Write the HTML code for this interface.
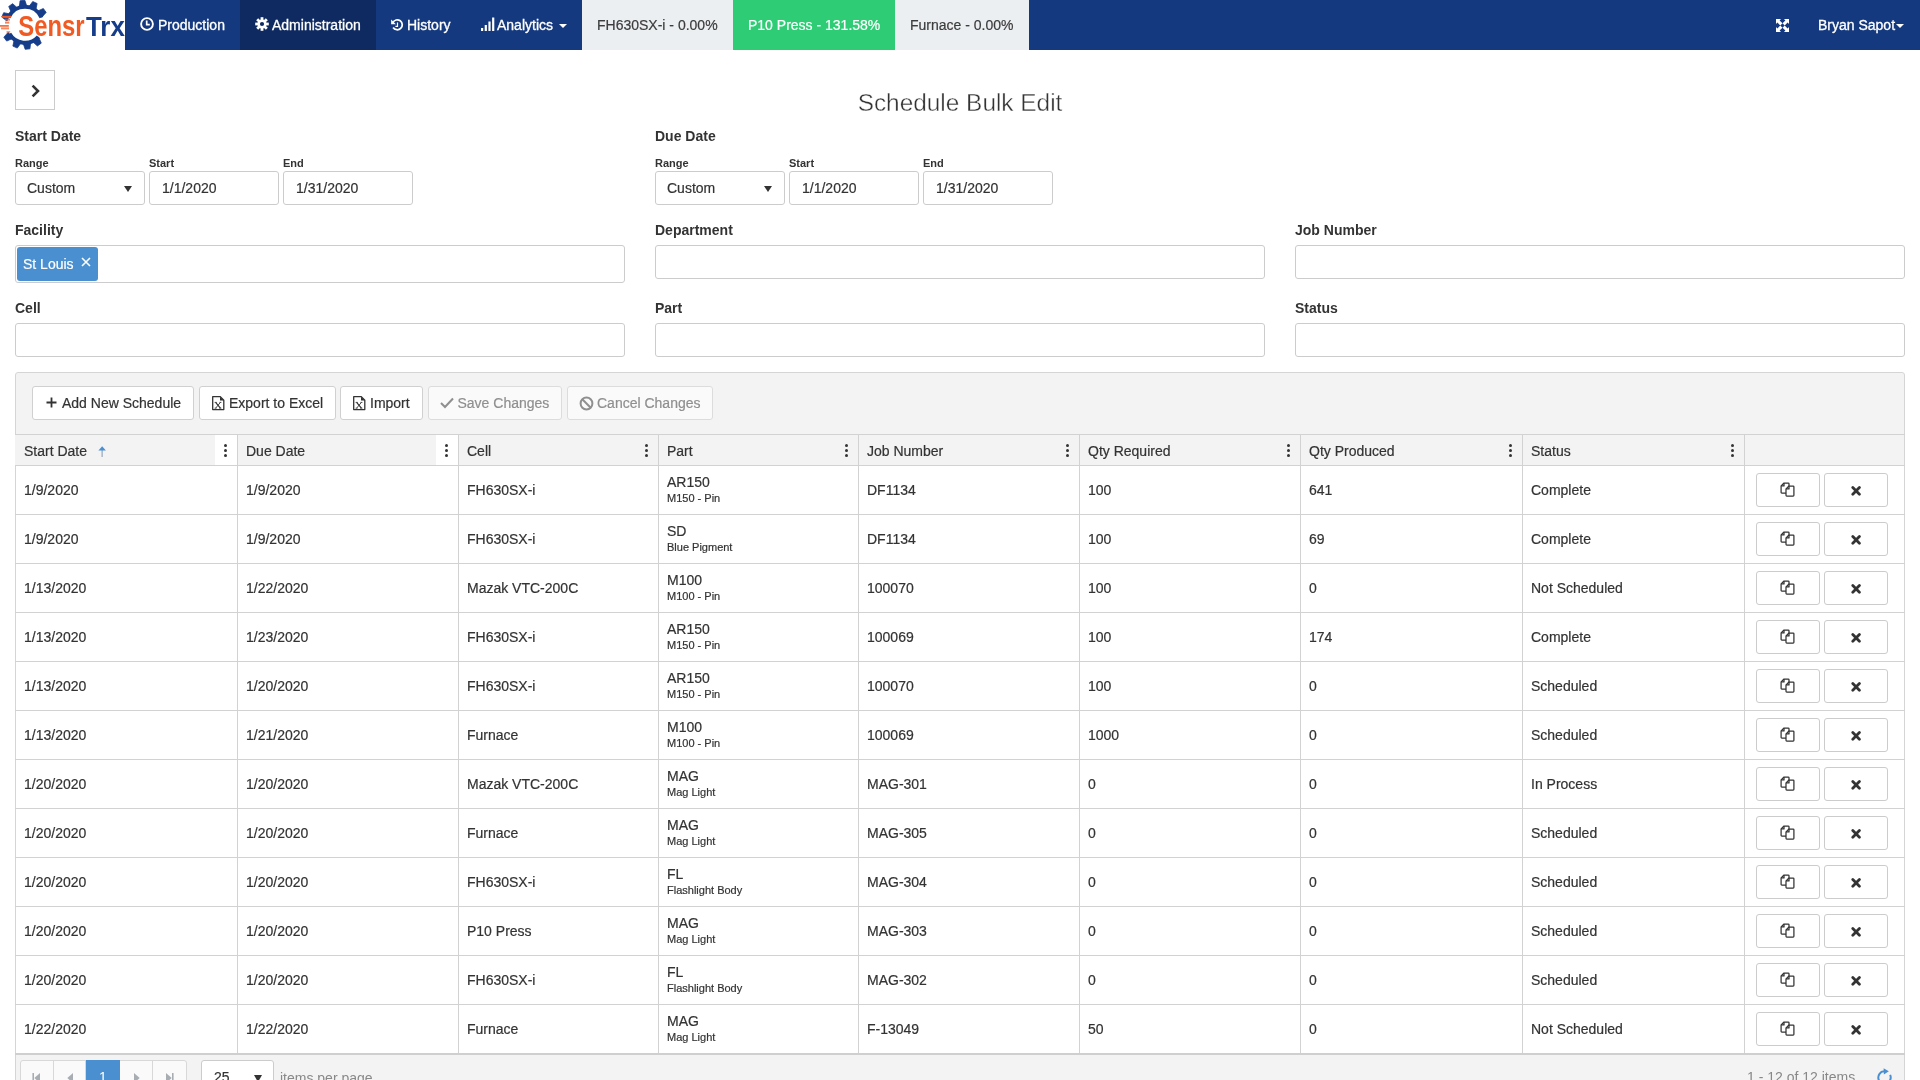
<!DOCTYPE html>
<html><head><meta charset="utf-8"><title>Schedule Bulk Edit</title><style>
html,body{margin:0;padding:0;}
body{width:1920px;height:1080px;overflow:hidden;position:relative;background:#fff;font-family:"Liberation Sans",sans-serif;font-size:14px;color:#333;}
.abs{position:absolute;}
/* navbar */
.nav{position:absolute;left:0;top:0;width:1920px;height:50px;background:#14397f;}
.logo{position:absolute;left:0;top:0;width:125px;height:50px;background:#fff;}
.ni{position:absolute;top:0;height:50px;color:#fff;font-size:14px;line-height:50px;white-space:nowrap;}
.ni .tx{position:absolute;top:0;}
.ni svg{position:absolute;}
.act{background:#0e2a60;}
.seg{position:absolute;top:0;height:50px;line-height:50px;font-size:14px;color:#3c3c3c;background:#eceff1;white-space:nowrap;}
.seg.g{background:#2fcc76;color:#fff;}
.seg span{position:absolute;top:0;}
/* form */
.toggle{position:absolute;left:15px;top:70px;width:38px;height:38px;border:1px solid #ccc;background:#fff;}
.title{position:absolute;left:0;width:1920px;top:87px;text-align:center;font-size:24.4px;color:#333;line-height:32px;-webkit-text-stroke:0.4px #fff;}
.lbl{position:absolute;font-weight:bold;font-size:14px;color:#333;line-height:16px;white-space:nowrap;}
.slbl{position:absolute;font-weight:bold;font-size:11px;color:#333;line-height:12px;}
.inp{position:absolute;box-sizing:border-box;border:1px solid #ccc;border-radius:3px;background:#fff;height:34px;}
.inp .v{position:absolute;left:12px;top:0;line-height:32px;font-size:14px;color:#333;}
.caret{position:absolute;width:0;height:0;border-left:4px solid transparent;border-right:4px solid transparent;border-top:4px solid #333;}
.chip{position:absolute;left:2px;top:2px;width:81px;height:34px;background:#4a8fcf;border-radius:3px;color:#fff;}
/* grid */
.grid{position:absolute;left:15px;top:372px;width:1890px;height:720px;background:#f3f3f3;border:1px solid #d5d5d5;border-radius:3px 3px 0 0;box-sizing:border-box;}
.btn{position:absolute;top:386px;height:34px;box-sizing:border-box;border:1px solid #d0d0d0;border-radius:3px;background:#fff;color:#333;font-size:14px;line-height:32px;white-space:nowrap;}
.btn.dis{color:#8f8f8f;background:#fafafa;border-color:#dcdcdc;}
.btn span{position:absolute;top:0;}
.btn svg{position:absolute;}
.th{position:absolute;top:435px;height:30px;line-height:32px;box-sizing:border-box;padding-left:9px;color:#333;font-size:14px;background:#f3f3f3;white-space:nowrap;}
.kebab{position:absolute;right:0;top:0;width:22px;height:30px;}
.kw{background:#fff;}
.kebab i{position:absolute;left:9px;width:3px;height:3px;border-radius:50%;background:#333;}
.kebab i:nth-child(1){top:9px}.kebab i:nth-child(2){top:14px}.kebab i:nth-child(3){top:19px}
.sortarrow{position:absolute;left:83px;top:0;}
.sortarrow svg{position:absolute;top:11px;}
.vl{position:absolute;top:435px;width:1px;height:618px;background:#d2d2d2;}
.hl{position:absolute;left:15px;width:1890px;height:1px;background:#d2d2d2;}
.rowbg{position:absolute;left:16px;width:1888px;background:#fff;}
.td{position:absolute;height:49px;line-height:49px;font-size:14px;color:#333;white-space:nowrap;}
.td.part{line-height:normal;}
.pn{position:absolute;top:9px;font-size:14px;line-height:16px;}
.pd{position:absolute;top:27px;font-size:11px;line-height:13px;white-space:nowrap;}
.abtn{position:absolute;width:64px;height:34px;box-sizing:border-box;border:1px solid #ccc;border-radius:3px;background:#fff;}
.abtn svg{position:absolute;}

.pager{position:absolute;height:40px;box-sizing:border-box;border:1px solid #d8d8d8;border-radius:3px;background:#fafafa;overflow:hidden;}
.pb{position:absolute;top:0;height:40px;box-sizing:border-box;border-right:1px solid #d8d8d8;}
.pb.act1{background:#4a8fcf;border-right:none;top:-1px;height:41px;}
.td,.pn,.pd,.th,.v,.btn span,.seg span,.chip span{-webkit-text-stroke:0.2px currentColor;}
.ni .tx{-webkit-text-stroke:0.3px currentColor;}

</style></head><body>
<div id="wrap" style="position:absolute;left:0;top:0;width:1920px;height:1080px;overflow:hidden;will-change:transform;">
<div class="nav">
  <div class="logo">
    <svg width="125" height="50" viewBox="0 0 125 50">
      <g fill="#163d8a">
        <path d="M8.56 17.48 A18.00 18.00 0 0 1 41.44 17.48" fill="none" stroke="#163d8a" stroke-width="4"/>
        <path d="M38.38 36.84 A18.00 18.00 0 0 1 9.41 33.80" fill="none" stroke="#163d8a" stroke-width="4"/>
        <path d="M19.34 7.30 L20.06 0.78 L24.84 0.28 L26.90 6.50 Z" stroke="#163d8a" stroke-width="0.8" stroke-linejoin="round"/>
        <path d="M28.85 6.81 L32.73 1.53 L37.12 3.49 L35.79 9.90 Z" stroke="#163d8a" stroke-width="0.8" stroke-linejoin="round"/>
        <path d="M37.33 11.15 L43.33 8.52 L46.15 12.40 L41.80 17.29 Z" stroke="#163d8a" stroke-width="0.8" stroke-linejoin="round"/>
        <path d="M11.35 12.47 L8.72 6.47 L12.60 3.65 L17.49 8.00 Z" stroke="#163d8a" stroke-width="0.8" stroke-linejoin="round"/>
        <path d="M7.01 20.95 L1.73 17.07 L3.69 12.68 L10.10 14.01 Z" stroke="#163d8a" stroke-width="0.8" stroke-linejoin="round"/>
        <path d="M12.67 38.45 L6.67 41.08 L3.85 37.20 L8.20 32.31 Z" stroke="#163d8a" stroke-width="0.8" stroke-linejoin="round"/>
        <path d="M21.15 42.79 L17.27 48.07 L12.88 46.11 L14.21 39.70 Z" stroke="#163d8a" stroke-width="0.8" stroke-linejoin="round"/>
        <path d="M30.66 42.30 L29.94 48.82 L25.16 49.32 L23.10 43.10 Z" stroke="#163d8a" stroke-width="0.8" stroke-linejoin="round"/>
        <path d="M38.65 37.13 L41.28 43.13 L37.40 45.95 L32.51 41.60 Z" stroke="#163d8a" stroke-width="0.8" stroke-linejoin="round"/>
      </g>
      <g fill="#f15a22">
        <rect x="2" y="15.8" width="9" height="2"/>
        <rect x="5" y="18.6" width="5" height="2" opacity="0.75"/>
        <rect x="5" y="21.6" width="4.3" height="2" opacity="0.75"/>
        <rect x="0" y="25" width="8.8" height="1.8" opacity="0.85"/>
        <rect x="1" y="27.4" width="8" height="2" opacity="0.7"/>
        <rect x="6.5" y="31" width="3.7" height="1.8" opacity="0.6"/>
      </g>
      <text x="18.3" y="36.3" font-family="Liberation Sans" font-weight="bold" font-size="29.5" fill="#f15a22" textLength="66.3" lengthAdjust="spacingAndGlyphs">Sensr</text>
      <text x="86" y="36.2" font-family="Liberation Sans" font-weight="bold" font-size="28" fill="#163d8a" textLength="38.8" lengthAdjust="spacingAndGlyphs">Trx</text>
    </svg>
  </div>
  <div class="ni" style="left:125px;width:115px;">
    <svg style="left:15px;top:17px" width="14" height="14" viewBox="0 0 14 14"><circle cx="7" cy="7" r="5.9" fill="none" stroke="#fff" stroke-width="1.9"/><path d="M6.7 3.6 V7.6 H9.8" fill="none" stroke="#fff" stroke-width="1.7"/></svg>
    <span class="tx" style="left:33px">Production</span>
  </div>
  <div class="ni act" style="left:240px;width:136px;">
    <svg style="left:15px;top:17px" width="14" height="14" viewBox="0 0 14 14"><g fill="#fff"><circle cx="7" cy="7" r="4.6"/><rect x="5.6" y="0.2" width="2.8" height="13.6"/><rect x="0.2" y="5.6" width="13.6" height="2.8"/><rect x="5.6" y="0.2" width="2.8" height="13.6" transform="rotate(45 7 7)"/><rect x="5.6" y="0.2" width="2.8" height="13.6" transform="rotate(-45 7 7)"/></g><circle cx="7" cy="7" r="2.1" fill="#0e2a60"/></svg>
    <span class="tx" style="left:32px">Administration</span>
  </div>
  <div class="ni" style="left:376px;width:89px;">
    <svg style="left:14px;top:18px" width="14" height="14" viewBox="0 0 14 14"><path d="M2.81 4.71 A4.95 4.95 0 1 1 3.10 9.42" fill="none" stroke="#fff" stroke-width="1.75"/><path d="M1.1 1.4 L1.1 6.2 L5.9 6.2 Z" fill="#fff"/><path d="M7.5 4.6 V8.3 H5.4" fill="none" stroke="#fff" stroke-width="1.2"/></svg>
    <span class="tx" style="left:31px">History</span>
  </div>
  <div class="ni" style="left:465px;width:117px;">
    <svg style="left:16px;top:17px" width="14" height="15" viewBox="0 0 14 15"><g fill="#fff"><rect x="0" y="11" width="2.2" height="3"/><rect x="3.7" y="8" width="2.2" height="6"/><rect x="7.4" y="4.5" width="2.2" height="9.5"/><rect x="11.1" y="0.5" width="2.2" height="13.5"/></g></svg>
    <span class="tx" style="left:32px">Analytics</span>
    <div class="caret" style="left:94px;top:24px;border-top-color:#fff;"></div>
  </div>
  <div class="seg" style="left:582px;width:151px;"><span style="left:15px">FH630SX-i - 0.00%</span></div>
  <div class="seg g" style="left:733px;width:162px;"><span style="left:15px">P10 Press - 131.58%</span></div>
  <div class="seg" style="left:895px;width:134px;"><span style="left:15px">Furnace - 0.00%</span></div>
  <svg class="abs" style="left:1776px;top:19px" width="13" height="13" viewBox="0 0 13 13"><g fill="#fff"><path d="M0 0 H5 L3.6 1.4 L6.5 4.3 L4.3 6.5 L1.4 3.6 L0 5 Z"/><path d="M13 0 V5 L11.6 3.6 L8.7 6.5 L6.5 4.3 L9.4 1.4 L8 0 Z"/><path d="M0 13 V8 L1.4 9.4 L4.3 6.5 L6.5 8.7 L3.6 11.6 L5 13 Z"/><path d="M13 13 H8 L9.4 11.6 L6.5 8.7 L8.7 6.5 L11.6 9.4 L13 8 Z"/></g></svg>
  <div class="ni" style="left:1818px;width:100px;"><span class="tx" style="left:0">Bryan Sapot</span><div class="caret" style="left:78px;top:24px;border-top-color:#fff;"></div></div>
</div>

<div class="toggle"><svg style="position:absolute;left:14px;top:13px" width="12" height="14" viewBox="0 0 12 14"><path d="M2.6 1.6 L8 7 L2.6 12.4" fill="none" stroke="#333" stroke-width="2.6"/></svg></div>
<div class="title">Schedule Bulk Edit</div>

<div class="lbl" style="left:15px;top:128px">Start Date</div>
<div class="slbl" style="left:15px;top:157px">Range</div>
<div class="slbl" style="left:149px;top:157px">Start</div>
<div class="slbl" style="left:283px;top:157px">End</div>
<div class="inp" style="left:15px;top:171px;width:130px;"><span class="v" style="left:11px">Custom</span><div class="caret" style="left:108px;top:14px;border-top-width:6px;border-left-width:4px;border-right-width:4px"></div></div>
<div class="inp" style="left:149px;top:171px;width:130px;"><span class="v">1/1/2020</span></div>
<div class="inp" style="left:283px;top:171px;width:130px;"><span class="v">1/31/2020</span></div>

<div class="lbl" style="left:655px;top:128px">Due Date</div>
<div class="slbl" style="left:655px;top:157px">Range</div>
<div class="slbl" style="left:789px;top:157px">Start</div>
<div class="slbl" style="left:923px;top:157px">End</div>
<div class="inp" style="left:655px;top:171px;width:130px;"><span class="v" style="left:11px">Custom</span><div class="caret" style="left:108px;top:14px;border-top-width:6px;border-left-width:4px;border-right-width:4px"></div></div>
<div class="inp" style="left:789px;top:171px;width:130px;"><span class="v">1/1/2020</span></div>
<div class="inp" style="left:923px;top:171px;width:130px;"><span class="v">1/31/2020</span></div>

<div class="lbl" style="left:15px;top:222px">Facility</div>
<div class="inp" style="left:15px;top:245px;width:610px;height:38px;"><div class="chip" style="left:1px;top:1px"><span style="position:absolute;left:6px;top:0;line-height:34px">St Louis</span><svg style="position:absolute;left:64px;top:10px" width="10" height="10" viewBox="0 0 10 10"><path d="M1 1 L9 9 M9 1 L1 9" stroke="#fff" stroke-width="1.6"/></svg></div></div>
<div class="lbl" style="left:655px;top:222px">Department</div>
<div class="inp" style="left:655px;top:245px;width:610px;"></div>
<div class="lbl" style="left:1295px;top:222px">Job Number</div>
<div class="inp" style="left:1295px;top:245px;width:610px;"></div>

<div class="lbl" style="left:15px;top:300px">Cell</div>
<div class="inp" style="left:15px;top:323px;width:610px;"></div>
<div class="lbl" style="left:655px;top:300px">Part</div>
<div class="inp" style="left:655px;top:323px;width:610px;"></div>
<div class="lbl" style="left:1295px;top:300px">Status</div>
<div class="inp" style="left:1295px;top:323px;width:610px;"></div>

<div class="grid"></div>
<div class="rowbg" style="top:466px;height:587px"></div>
<div class="hl" style="top:434px"></div>
<div class="th" style="left:15px;width:222px">Start Date<span class="sortarrow"><svg width="8" height="12" viewBox="0 0 8 12"><path d="M3.4 4 H4.9 V11 H3.4 Z" fill="#a9b6c6"/><path d="M0.4 4.6 L4.15 0.2 L7.9 4.6 Z" fill="#4a8fd0"/></svg></span><span class="kebab kw"><i></i><i></i><i></i></span></div>
<div class="th" style="left:237px;width:221px">Due Date<span class="kebab kw"><i></i><i></i><i></i></span></div>
<div class="th" style="left:458px;width:200px">Cell<span class="kebab"><i></i><i></i><i></i></span></div>
<div class="th" style="left:658px;width:200px">Part<span class="kebab"><i></i><i></i><i></i></span></div>
<div class="th" style="left:858px;width:221px">Job Number<span class="kebab"><i></i><i></i><i></i></span></div>
<div class="th" style="left:1079px;width:221px">Qty Required<span class="kebab"><i></i><i></i><i></i></span></div>
<div class="th" style="left:1300px;width:222px">Qty Produced<span class="kebab"><i></i><i></i><i></i></span></div>
<div class="th" style="left:1522px;width:222px">Status<span class="kebab"><i></i><i></i><i></i></span></div>
<div class="th" style="left:1744px;width:160px"></div>
<div class="vl" style="left:237px"></div>
<div class="vl" style="left:458px"></div>
<div class="vl" style="left:658px"></div>
<div class="vl" style="left:858px"></div>
<div class="vl" style="left:1079px"></div>
<div class="vl" style="left:1300px"></div>
<div class="vl" style="left:1522px"></div>
<div class="vl" style="left:1744px"></div>
<div class="hl" style="top:465px"></div>
<div class="td" style="left:24px;top:466px">1/9/2020</div>
<div class="td" style="left:246px;top:466px">1/9/2020</div>
<div class="td" style="left:467px;top:466px">FH630SX-i</div>
<div class="td part" style="left:667px;top:465px"><div class="pn">AR150</div><div class="pd">M150 - Pin</div></div>
<div class="td" style="left:867px;top:466px">DF1134</div>
<div class="td" style="left:1088px;top:466px">100</div>
<div class="td" style="left:1309px;top:466px">641</div>
<div class="td" style="left:1531px;top:466px">Complete</div>
<div class="abtn" style="left:1756px;top:473px"><svg width="15" height="15" viewBox="0 0 15 15" style="left:22.8px;top:8.3px"><g fill="#fff" stroke="#333" stroke-width="1.25" stroke-linejoin="round"><path d="M1.1 3.9 L4 1 H8.2 Q9 1 9 1.8 V10.3 Q9 11.1 8.2 11.1 H1.9 Q1.1 11.1 1.1 10.3 Z"/><path d="M1.1 3.9 H4 V1" fill="none"/><path d="M6 6.9 L9 4 H13.1 Q13.9 4 13.9 4.8 V13.3 Q13.9 14.1 13.1 14.1 H6.8 Q6 14.1 6 13.3 Z"/><path d="M6 6.9 H9 V4" fill="none"/></g></svg></div>
<div class="abtn" style="left:1824px;top:473px"><svg width="11" height="11" viewBox="0 0 11 11" style="left:26px;top:11.6px"><path d="M1.8 1.6 L8.4 8.2 M8.4 1.6 L1.8 8.2" stroke="#333" stroke-width="2.8" stroke-linecap="round"/></svg></div>
<div class="hl" style="top:514px"></div>
<div class="td" style="left:24px;top:515px">1/9/2020</div>
<div class="td" style="left:246px;top:515px">1/9/2020</div>
<div class="td" style="left:467px;top:515px">FH630SX-i</div>
<div class="td part" style="left:667px;top:514px"><div class="pn">SD</div><div class="pd">Blue Pigment</div></div>
<div class="td" style="left:867px;top:515px">DF1134</div>
<div class="td" style="left:1088px;top:515px">100</div>
<div class="td" style="left:1309px;top:515px">69</div>
<div class="td" style="left:1531px;top:515px">Complete</div>
<div class="abtn" style="left:1756px;top:522px"><svg width="15" height="15" viewBox="0 0 15 15" style="left:22.8px;top:8.3px"><g fill="#fff" stroke="#333" stroke-width="1.25" stroke-linejoin="round"><path d="M1.1 3.9 L4 1 H8.2 Q9 1 9 1.8 V10.3 Q9 11.1 8.2 11.1 H1.9 Q1.1 11.1 1.1 10.3 Z"/><path d="M1.1 3.9 H4 V1" fill="none"/><path d="M6 6.9 L9 4 H13.1 Q13.9 4 13.9 4.8 V13.3 Q13.9 14.1 13.1 14.1 H6.8 Q6 14.1 6 13.3 Z"/><path d="M6 6.9 H9 V4" fill="none"/></g></svg></div>
<div class="abtn" style="left:1824px;top:522px"><svg width="11" height="11" viewBox="0 0 11 11" style="left:26px;top:11.6px"><path d="M1.8 1.6 L8.4 8.2 M8.4 1.6 L1.8 8.2" stroke="#333" stroke-width="2.8" stroke-linecap="round"/></svg></div>
<div class="hl" style="top:563px"></div>
<div class="td" style="left:24px;top:564px">1/13/2020</div>
<div class="td" style="left:246px;top:564px">1/22/2020</div>
<div class="td" style="left:467px;top:564px">Mazak VTC-200C</div>
<div class="td part" style="left:667px;top:563px"><div class="pn">M100</div><div class="pd">M100 - Pin</div></div>
<div class="td" style="left:867px;top:564px">100070</div>
<div class="td" style="left:1088px;top:564px">100</div>
<div class="td" style="left:1309px;top:564px">0</div>
<div class="td" style="left:1531px;top:564px">Not Scheduled</div>
<div class="abtn" style="left:1756px;top:571px"><svg width="15" height="15" viewBox="0 0 15 15" style="left:22.8px;top:8.3px"><g fill="#fff" stroke="#333" stroke-width="1.25" stroke-linejoin="round"><path d="M1.1 3.9 L4 1 H8.2 Q9 1 9 1.8 V10.3 Q9 11.1 8.2 11.1 H1.9 Q1.1 11.1 1.1 10.3 Z"/><path d="M1.1 3.9 H4 V1" fill="none"/><path d="M6 6.9 L9 4 H13.1 Q13.9 4 13.9 4.8 V13.3 Q13.9 14.1 13.1 14.1 H6.8 Q6 14.1 6 13.3 Z"/><path d="M6 6.9 H9 V4" fill="none"/></g></svg></div>
<div class="abtn" style="left:1824px;top:571px"><svg width="11" height="11" viewBox="0 0 11 11" style="left:26px;top:11.6px"><path d="M1.8 1.6 L8.4 8.2 M8.4 1.6 L1.8 8.2" stroke="#333" stroke-width="2.8" stroke-linecap="round"/></svg></div>
<div class="hl" style="top:612px"></div>
<div class="td" style="left:24px;top:613px">1/13/2020</div>
<div class="td" style="left:246px;top:613px">1/23/2020</div>
<div class="td" style="left:467px;top:613px">FH630SX-i</div>
<div class="td part" style="left:667px;top:612px"><div class="pn">AR150</div><div class="pd">M150 - Pin</div></div>
<div class="td" style="left:867px;top:613px">100069</div>
<div class="td" style="left:1088px;top:613px">100</div>
<div class="td" style="left:1309px;top:613px">174</div>
<div class="td" style="left:1531px;top:613px">Complete</div>
<div class="abtn" style="left:1756px;top:620px"><svg width="15" height="15" viewBox="0 0 15 15" style="left:22.8px;top:8.3px"><g fill="#fff" stroke="#333" stroke-width="1.25" stroke-linejoin="round"><path d="M1.1 3.9 L4 1 H8.2 Q9 1 9 1.8 V10.3 Q9 11.1 8.2 11.1 H1.9 Q1.1 11.1 1.1 10.3 Z"/><path d="M1.1 3.9 H4 V1" fill="none"/><path d="M6 6.9 L9 4 H13.1 Q13.9 4 13.9 4.8 V13.3 Q13.9 14.1 13.1 14.1 H6.8 Q6 14.1 6 13.3 Z"/><path d="M6 6.9 H9 V4" fill="none"/></g></svg></div>
<div class="abtn" style="left:1824px;top:620px"><svg width="11" height="11" viewBox="0 0 11 11" style="left:26px;top:11.6px"><path d="M1.8 1.6 L8.4 8.2 M8.4 1.6 L1.8 8.2" stroke="#333" stroke-width="2.8" stroke-linecap="round"/></svg></div>
<div class="hl" style="top:661px"></div>
<div class="td" style="left:24px;top:662px">1/13/2020</div>
<div class="td" style="left:246px;top:662px">1/20/2020</div>
<div class="td" style="left:467px;top:662px">FH630SX-i</div>
<div class="td part" style="left:667px;top:661px"><div class="pn">AR150</div><div class="pd">M150 - Pin</div></div>
<div class="td" style="left:867px;top:662px">100070</div>
<div class="td" style="left:1088px;top:662px">100</div>
<div class="td" style="left:1309px;top:662px">0</div>
<div class="td" style="left:1531px;top:662px">Scheduled</div>
<div class="abtn" style="left:1756px;top:669px"><svg width="15" height="15" viewBox="0 0 15 15" style="left:22.8px;top:8.3px"><g fill="#fff" stroke="#333" stroke-width="1.25" stroke-linejoin="round"><path d="M1.1 3.9 L4 1 H8.2 Q9 1 9 1.8 V10.3 Q9 11.1 8.2 11.1 H1.9 Q1.1 11.1 1.1 10.3 Z"/><path d="M1.1 3.9 H4 V1" fill="none"/><path d="M6 6.9 L9 4 H13.1 Q13.9 4 13.9 4.8 V13.3 Q13.9 14.1 13.1 14.1 H6.8 Q6 14.1 6 13.3 Z"/><path d="M6 6.9 H9 V4" fill="none"/></g></svg></div>
<div class="abtn" style="left:1824px;top:669px"><svg width="11" height="11" viewBox="0 0 11 11" style="left:26px;top:11.6px"><path d="M1.8 1.6 L8.4 8.2 M8.4 1.6 L1.8 8.2" stroke="#333" stroke-width="2.8" stroke-linecap="round"/></svg></div>
<div class="hl" style="top:710px"></div>
<div class="td" style="left:24px;top:711px">1/13/2020</div>
<div class="td" style="left:246px;top:711px">1/21/2020</div>
<div class="td" style="left:467px;top:711px">Furnace</div>
<div class="td part" style="left:667px;top:710px"><div class="pn">M100</div><div class="pd">M100 - Pin</div></div>
<div class="td" style="left:867px;top:711px">100069</div>
<div class="td" style="left:1088px;top:711px">1000</div>
<div class="td" style="left:1309px;top:711px">0</div>
<div class="td" style="left:1531px;top:711px">Scheduled</div>
<div class="abtn" style="left:1756px;top:718px"><svg width="15" height="15" viewBox="0 0 15 15" style="left:22.8px;top:8.3px"><g fill="#fff" stroke="#333" stroke-width="1.25" stroke-linejoin="round"><path d="M1.1 3.9 L4 1 H8.2 Q9 1 9 1.8 V10.3 Q9 11.1 8.2 11.1 H1.9 Q1.1 11.1 1.1 10.3 Z"/><path d="M1.1 3.9 H4 V1" fill="none"/><path d="M6 6.9 L9 4 H13.1 Q13.9 4 13.9 4.8 V13.3 Q13.9 14.1 13.1 14.1 H6.8 Q6 14.1 6 13.3 Z"/><path d="M6 6.9 H9 V4" fill="none"/></g></svg></div>
<div class="abtn" style="left:1824px;top:718px"><svg width="11" height="11" viewBox="0 0 11 11" style="left:26px;top:11.6px"><path d="M1.8 1.6 L8.4 8.2 M8.4 1.6 L1.8 8.2" stroke="#333" stroke-width="2.8" stroke-linecap="round"/></svg></div>
<div class="hl" style="top:759px"></div>
<div class="td" style="left:24px;top:760px">1/20/2020</div>
<div class="td" style="left:246px;top:760px">1/20/2020</div>
<div class="td" style="left:467px;top:760px">Mazak VTC-200C</div>
<div class="td part" style="left:667px;top:759px"><div class="pn">MAG</div><div class="pd">Mag Light</div></div>
<div class="td" style="left:867px;top:760px">MAG-301</div>
<div class="td" style="left:1088px;top:760px">0</div>
<div class="td" style="left:1309px;top:760px">0</div>
<div class="td" style="left:1531px;top:760px">In Process</div>
<div class="abtn" style="left:1756px;top:767px"><svg width="15" height="15" viewBox="0 0 15 15" style="left:22.8px;top:8.3px"><g fill="#fff" stroke="#333" stroke-width="1.25" stroke-linejoin="round"><path d="M1.1 3.9 L4 1 H8.2 Q9 1 9 1.8 V10.3 Q9 11.1 8.2 11.1 H1.9 Q1.1 11.1 1.1 10.3 Z"/><path d="M1.1 3.9 H4 V1" fill="none"/><path d="M6 6.9 L9 4 H13.1 Q13.9 4 13.9 4.8 V13.3 Q13.9 14.1 13.1 14.1 H6.8 Q6 14.1 6 13.3 Z"/><path d="M6 6.9 H9 V4" fill="none"/></g></svg></div>
<div class="abtn" style="left:1824px;top:767px"><svg width="11" height="11" viewBox="0 0 11 11" style="left:26px;top:11.6px"><path d="M1.8 1.6 L8.4 8.2 M8.4 1.6 L1.8 8.2" stroke="#333" stroke-width="2.8" stroke-linecap="round"/></svg></div>
<div class="hl" style="top:808px"></div>
<div class="td" style="left:24px;top:809px">1/20/2020</div>
<div class="td" style="left:246px;top:809px">1/20/2020</div>
<div class="td" style="left:467px;top:809px">Furnace</div>
<div class="td part" style="left:667px;top:808px"><div class="pn">MAG</div><div class="pd">Mag Light</div></div>
<div class="td" style="left:867px;top:809px">MAG-305</div>
<div class="td" style="left:1088px;top:809px">0</div>
<div class="td" style="left:1309px;top:809px">0</div>
<div class="td" style="left:1531px;top:809px">Scheduled</div>
<div class="abtn" style="left:1756px;top:816px"><svg width="15" height="15" viewBox="0 0 15 15" style="left:22.8px;top:8.3px"><g fill="#fff" stroke="#333" stroke-width="1.25" stroke-linejoin="round"><path d="M1.1 3.9 L4 1 H8.2 Q9 1 9 1.8 V10.3 Q9 11.1 8.2 11.1 H1.9 Q1.1 11.1 1.1 10.3 Z"/><path d="M1.1 3.9 H4 V1" fill="none"/><path d="M6 6.9 L9 4 H13.1 Q13.9 4 13.9 4.8 V13.3 Q13.9 14.1 13.1 14.1 H6.8 Q6 14.1 6 13.3 Z"/><path d="M6 6.9 H9 V4" fill="none"/></g></svg></div>
<div class="abtn" style="left:1824px;top:816px"><svg width="11" height="11" viewBox="0 0 11 11" style="left:26px;top:11.6px"><path d="M1.8 1.6 L8.4 8.2 M8.4 1.6 L1.8 8.2" stroke="#333" stroke-width="2.8" stroke-linecap="round"/></svg></div>
<div class="hl" style="top:857px"></div>
<div class="td" style="left:24px;top:858px">1/20/2020</div>
<div class="td" style="left:246px;top:858px">1/20/2020</div>
<div class="td" style="left:467px;top:858px">FH630SX-i</div>
<div class="td part" style="left:667px;top:857px"><div class="pn">FL</div><div class="pd">Flashlight Body</div></div>
<div class="td" style="left:867px;top:858px">MAG-304</div>
<div class="td" style="left:1088px;top:858px">0</div>
<div class="td" style="left:1309px;top:858px">0</div>
<div class="td" style="left:1531px;top:858px">Scheduled</div>
<div class="abtn" style="left:1756px;top:865px"><svg width="15" height="15" viewBox="0 0 15 15" style="left:22.8px;top:8.3px"><g fill="#fff" stroke="#333" stroke-width="1.25" stroke-linejoin="round"><path d="M1.1 3.9 L4 1 H8.2 Q9 1 9 1.8 V10.3 Q9 11.1 8.2 11.1 H1.9 Q1.1 11.1 1.1 10.3 Z"/><path d="M1.1 3.9 H4 V1" fill="none"/><path d="M6 6.9 L9 4 H13.1 Q13.9 4 13.9 4.8 V13.3 Q13.9 14.1 13.1 14.1 H6.8 Q6 14.1 6 13.3 Z"/><path d="M6 6.9 H9 V4" fill="none"/></g></svg></div>
<div class="abtn" style="left:1824px;top:865px"><svg width="11" height="11" viewBox="0 0 11 11" style="left:26px;top:11.6px"><path d="M1.8 1.6 L8.4 8.2 M8.4 1.6 L1.8 8.2" stroke="#333" stroke-width="2.8" stroke-linecap="round"/></svg></div>
<div class="hl" style="top:906px"></div>
<div class="td" style="left:24px;top:907px">1/20/2020</div>
<div class="td" style="left:246px;top:907px">1/20/2020</div>
<div class="td" style="left:467px;top:907px">P10 Press</div>
<div class="td part" style="left:667px;top:906px"><div class="pn">MAG</div><div class="pd">Mag Light</div></div>
<div class="td" style="left:867px;top:907px">MAG-303</div>
<div class="td" style="left:1088px;top:907px">0</div>
<div class="td" style="left:1309px;top:907px">0</div>
<div class="td" style="left:1531px;top:907px">Scheduled</div>
<div class="abtn" style="left:1756px;top:914px"><svg width="15" height="15" viewBox="0 0 15 15" style="left:22.8px;top:8.3px"><g fill="#fff" stroke="#333" stroke-width="1.25" stroke-linejoin="round"><path d="M1.1 3.9 L4 1 H8.2 Q9 1 9 1.8 V10.3 Q9 11.1 8.2 11.1 H1.9 Q1.1 11.1 1.1 10.3 Z"/><path d="M1.1 3.9 H4 V1" fill="none"/><path d="M6 6.9 L9 4 H13.1 Q13.9 4 13.9 4.8 V13.3 Q13.9 14.1 13.1 14.1 H6.8 Q6 14.1 6 13.3 Z"/><path d="M6 6.9 H9 V4" fill="none"/></g></svg></div>
<div class="abtn" style="left:1824px;top:914px"><svg width="11" height="11" viewBox="0 0 11 11" style="left:26px;top:11.6px"><path d="M1.8 1.6 L8.4 8.2 M8.4 1.6 L1.8 8.2" stroke="#333" stroke-width="2.8" stroke-linecap="round"/></svg></div>
<div class="hl" style="top:955px"></div>
<div class="td" style="left:24px;top:956px">1/20/2020</div>
<div class="td" style="left:246px;top:956px">1/20/2020</div>
<div class="td" style="left:467px;top:956px">FH630SX-i</div>
<div class="td part" style="left:667px;top:955px"><div class="pn">FL</div><div class="pd">Flashlight Body</div></div>
<div class="td" style="left:867px;top:956px">MAG-302</div>
<div class="td" style="left:1088px;top:956px">0</div>
<div class="td" style="left:1309px;top:956px">0</div>
<div class="td" style="left:1531px;top:956px">Scheduled</div>
<div class="abtn" style="left:1756px;top:963px"><svg width="15" height="15" viewBox="0 0 15 15" style="left:22.8px;top:8.3px"><g fill="#fff" stroke="#333" stroke-width="1.25" stroke-linejoin="round"><path d="M1.1 3.9 L4 1 H8.2 Q9 1 9 1.8 V10.3 Q9 11.1 8.2 11.1 H1.9 Q1.1 11.1 1.1 10.3 Z"/><path d="M1.1 3.9 H4 V1" fill="none"/><path d="M6 6.9 L9 4 H13.1 Q13.9 4 13.9 4.8 V13.3 Q13.9 14.1 13.1 14.1 H6.8 Q6 14.1 6 13.3 Z"/><path d="M6 6.9 H9 V4" fill="none"/></g></svg></div>
<div class="abtn" style="left:1824px;top:963px"><svg width="11" height="11" viewBox="0 0 11 11" style="left:26px;top:11.6px"><path d="M1.8 1.6 L8.4 8.2 M8.4 1.6 L1.8 8.2" stroke="#333" stroke-width="2.8" stroke-linecap="round"/></svg></div>
<div class="hl" style="top:1004px"></div>
<div class="td" style="left:24px;top:1005px">1/22/2020</div>
<div class="td" style="left:246px;top:1005px">1/22/2020</div>
<div class="td" style="left:467px;top:1005px">Furnace</div>
<div class="td part" style="left:667px;top:1004px"><div class="pn">MAG</div><div class="pd">Mag Light</div></div>
<div class="td" style="left:867px;top:1005px">F-13049</div>
<div class="td" style="left:1088px;top:1005px">50</div>
<div class="td" style="left:1309px;top:1005px">0</div>
<div class="td" style="left:1531px;top:1005px">Not Scheduled</div>
<div class="abtn" style="left:1756px;top:1012px"><svg width="15" height="15" viewBox="0 0 15 15" style="left:22.8px;top:8.3px"><g fill="#fff" stroke="#333" stroke-width="1.25" stroke-linejoin="round"><path d="M1.1 3.9 L4 1 H8.2 Q9 1 9 1.8 V10.3 Q9 11.1 8.2 11.1 H1.9 Q1.1 11.1 1.1 10.3 Z"/><path d="M1.1 3.9 H4 V1" fill="none"/><path d="M6 6.9 L9 4 H13.1 Q13.9 4 13.9 4.8 V13.3 Q13.9 14.1 13.1 14.1 H6.8 Q6 14.1 6 13.3 Z"/><path d="M6 6.9 H9 V4" fill="none"/></g></svg></div>
<div class="abtn" style="left:1824px;top:1012px"><svg width="11" height="11" viewBox="0 0 11 11" style="left:26px;top:11.6px"><path d="M1.8 1.6 L8.4 8.2 M8.4 1.6 L1.8 8.2" stroke="#333" stroke-width="2.8" stroke-linecap="round"/></svg></div>
<div class="hl" style="top:1053px;height:2px;background:#cfcfcf"></div>

<div class="btn" style="left:32px;width:162px;"><svg style="left:13px;top:10px" width="11" height="11" viewBox="0 0 11 11"><path d="M5.5 0.5 V10.5 M0.5 5.5 H10.5" stroke="#333" stroke-width="1.8"/></svg><span style="left:29px">Add New Schedule</span></div>
<div class="btn" style="left:199px;width:137px;"><svg style="left:12px;top:9px" width="13" height="15" viewBox="0 0 13 15"><path d="M0.7 0.7 H8.3 L11.8 4.2 V13.6 H0.7 Z" fill="none" stroke="#333" stroke-width="1.3" stroke-linejoin="round"/><path d="M8 0.7 L11.8 4.5 H8 Z" fill="#333"/><path d="M3.6 6.4 L8.4 12.2" stroke="#333" stroke-width="1.2"/><path d="M8.4 6.4 L3.6 12.2" stroke="#333" stroke-width="0.9"/><path d="M2.6 6.4 H4.8 M7.4 6.4 H9.4 M2.6 12.2 H4.6 M7.2 12.2 H9.4" stroke="#333" stroke-width="0.8"/></svg><span style="left:29px">Export to Excel</span></div>
<div class="btn" style="left:340px;width:83px;"><svg style="left:12px;top:9px" width="13" height="15" viewBox="0 0 13 15"><path d="M0.7 0.7 H8.3 L11.8 4.2 V13.6 H0.7 Z" fill="none" stroke="#333" stroke-width="1.3" stroke-linejoin="round"/><path d="M8 0.7 L11.8 4.5 H8 Z" fill="#333"/><path d="M3.6 6.4 L8.4 12.2" stroke="#333" stroke-width="1.2"/><path d="M8.4 6.4 L3.6 12.2" stroke="#333" stroke-width="0.9"/><path d="M2.6 6.4 H4.8 M7.4 6.4 H9.4 M2.6 12.2 H4.6 M7.2 12.2 H9.4" stroke="#333" stroke-width="0.8"/></svg><span style="left:29px">Import</span></div>
<div class="btn dis" style="left:428px;width:134px;"><svg style="left:11px;top:10px" width="14" height="12" viewBox="0 0 14 12"><path d="M1 6 L5 10 L13 1.5" fill="none" stroke="#8f8f8f" stroke-width="2"/></svg><span style="left:28.5px">Save Changes</span></div>
<div class="btn dis" style="left:567px;width:146px;"><svg style="left:10.5px;top:8.5px" width="15" height="15" viewBox="0 0 15 15"><circle cx="7.5" cy="7.5" r="5.9" fill="none" stroke="#8f8f8f" stroke-width="2"/><path d="M3.3 3.3 L11.7 11.7" stroke="#8f8f8f" stroke-width="2"/></svg><span style="left:29px">Cancel Changes</span></div>

<div class="pager" style="left:20px;top:1060px;width:167px;">
  <div class="pb" style="left:0;width:33px"><svg style="position:absolute;left:11px;top:12px" width="9" height="10" viewBox="0 0 9 10"><path d="M1.2 0 V10" stroke="#a8adb4" stroke-width="1.6"/><path d="M8 0 V10 L2.3 5 Z" fill="#a8adb4"/></svg></div>
  <div class="pb" style="left:33px;width:32px"><svg style="position:absolute;left:12.5px;top:12px" width="6" height="10" viewBox="0 0 6 10"><path d="M6 0 V10 L0.3 5 Z" fill="#a8adb4"/></svg></div>
  <div class="pb" style="left:99px;width:33px"><svg style="position:absolute;left:13.5px;top:12px" width="6" height="10" viewBox="0 0 6 10"><path d="M0 0 V10 L5.7 5 Z" fill="#a8adb4"/></svg></div>
  <div class="pb" style="left:132px;width:34px;border-right:none"><svg style="position:absolute;left:12px;top:12px" width="9" height="10" viewBox="0 0 9 10"><path d="M7.8 0 V10" stroke="#a8adb4" stroke-width="1.6"/><path d="M1 0 V10 L6.7 5 Z" fill="#a8adb4"/></svg></div>
</div>
<div class="abs" style="left:86px;top:1060px;width:34px;height:20px;background:#4a8fcf;"><span style="position:absolute;left:13px;top:9px;line-height:16px;color:#fff">1</span></div>
<div class="inp" style="left:201px;top:1060px;width:73px;height:36px;"><span class="v" style="top:8px;line-height:16px">25</span><div class="caret" style="left:52px;top:14px;border-top-width:7px;border-left-width:4.5px;border-right-width:4.5px"></div></div>
<div class="abs" style="left:280px;top:1069.5px;color:#888;line-height:16px;white-space:nowrap">items per page</div>
<div class="abs" style="left:1747px;top:1069px;color:#888;line-height:16px;white-space:nowrap">1 - 12 of 12 items</div>
<svg class="abs" style="left:1875px;top:1067px" width="20" height="20" viewBox="0 0 20 20"><path d="M15.12 7.88 A6.20 6.20 0 1 1 8.96 4.32" fill="none" stroke="#4a8fd0" stroke-width="2"/><path d="M8.6 1.3 L13.8 4.2 L8.9 7.4 Z" fill="#4a8fd0"/></svg>

</div>
</body></html>
